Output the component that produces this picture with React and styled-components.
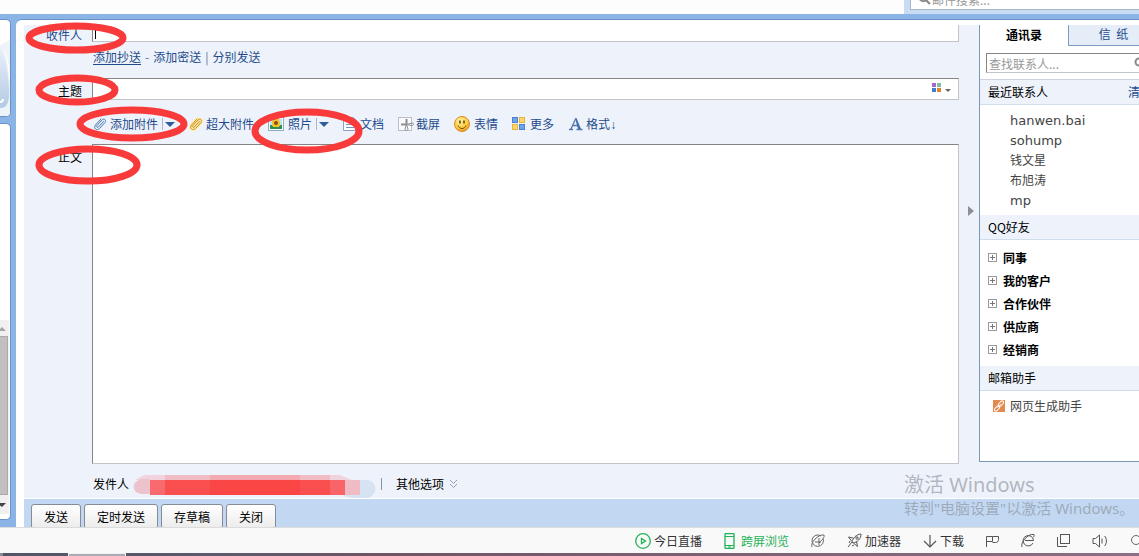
import React from "react";
import styled, { createGlobalStyle, css } from "styled-components";

const recentContacts = [
  { name: "hanwen.bai", latin: true },
  { name: "sohump", latin: true },
  { name: "钱文星" },
  { name: "布旭涛" },
  { name: "mp", latin: true },
];
const friendGroups = ["同事", "我的客户", "合作伙伴", "供应商", "经销商"];

function App() {
  return (
    <>
      <GlobalStyle />
      <PageStyled>
        <TopBar>
          <MailSearch>
            <SearchIcon size={14} />
            <input type="text" aria-label="邮件搜索" placeholder="邮件搜索..." />
          </MailSearch>
        </TopBar>
        <Workspace>
          <LeftRail />
          <MainPanel>
            <PanelInner>
              <Columns>
                <ComposeForm />
                <Divider>
                  <button type="button" aria-label="收起">
                    <svg width="6" height="10">
                      <path d="M0 0l6 5-6 5z" fill="#8c8f94" />
                    </svg>
                  </button>
                </Divider>
                <ContactsPanel />
              </Columns>
              <ActionBar>
                <ActionButton type="submit">发送</ActionButton>
                <ActionButton type="button">定时发送</ActionButton>
                <ActionButton type="button">存草稿</ActionButton>
                <ActionButton type="button">关闭</ActionButton>
              </ActionBar>
            </PanelInner>
          </MainPanel>
        </Workspace>
        <StatusBar />
        <Taskbar>
          <TaskItem $width="3px" />
          <TaskItem $width="58px" $active />
        </Taskbar>
        <Watermark>
          <p>激活 Windows</p>
          <small>转到"电脑设置"以激活 Windows。</small>
        </Watermark>
        <Markup />
      </PageStyled>
    </>
  );
}

function LeftRail() {
  return (
    <RailStyled>
      <RailCard $height="98px">
        <svg width="10" height="98">
          <defs>
            <linearGradient id="drop" x1="0" y1="0" x2="0" y2="1">
              <stop offset="0" stopColor="#e9eff8" />
              <stop offset="1" stopColor="#b3cae5" />
            </linearGradient>
          </defs>
          <path d="M0 27l10-5v76H0z" fill="#eef2f9" />
          <path d="M0 30c4 2 8 22 9 40s-4 20-9 20z" fill="url(#drop)" />
          <path d="M5 34c3 9 4 18 5 28" stroke="#fff" fill="none" />
          <path d="M0 84c2 0 3-1 3-3" stroke="#fff" strokeWidth="2" fill="none" />
        </svg>
      </RailCard>
      <RailCard $grow>
        <RailScroll>
          <svg width="6" height="16">
            <path d="M-2 11l4-4 4 4z" fill="#a5a5a5" />
          </svg>
          <RailThumb />
          <svg width="6" height="19">
            <path d="M-3 8h9l-4 4z" fill="#454545" />
          </svg>
        </RailScroll>
      </RailCard>
    </RailStyled>
  );
}

function ComposeForm() {
  return (
    <FormStyled>
      <FormRow $height="17px">
        <FieldLabel htmlFor="to" $link>
          收件人
        </FieldLabel>
        <Field $cut>
          <Caret />
          <input type="text" id="to" />
        </Field>
      </FormRow>
      <CopyLinks>
        <a className="underlined" href="#cc">
          添加抄送
        </a>
        <span>-</span>
        <a href="#bcc">添加密送</a>
        <span>|</span>
        <a href="#separate">分别发送</a>
      </CopyLinks>
      <FormRow $height="22px">
        <FieldLabel htmlFor="subject">主题</FieldLabel>
        <Field>
          <input type="text" id="subject" />
          <button type="button" aria-label="主题颜色">
            <svg width="19" height="12">
              <path d="M0 1h4v4H0z" fill="#a368c9" />
              <path d="M5 1h4v4H5z" fill="#83bda0" />
              <path d="M0 6h4v4H0z" fill="#3f7fd0" />
              <path d="M5 6h4v4H5z" fill="#e0832b" />
              <path d="M13 7h6l-3 3z" fill="#666" />
            </svg>
          </button>
        </Field>
      </FormRow>
      <Toolbar>
        <Tool type="button" $gap="3px">
          <ClipIcon light="#e8f0fa" line="#4f7dad" />
          添加附件
          <DropMark />
        </Tool>
        <Tool type="button" $gap="3px">
          <ClipIcon light="#ffe9a3" line="#c98f27" />
          超大附件
        </Tool>
        <Tool type="button" $gap="3px">
          <svg width="17" height="16">
            <rect x="0.5" y="1.5" width="15" height="13" fill="#fff" stroke="#8eabd0" />
            <path d="M2 3h12v7H2z" fill="#bfe3f2" />
            <path d="M2 9h12v4H2z" fill="#2f8f4f" />
            <path d="M5 3h6v2h1v5h-1v1H5v-1H4V5h1z" fill="#f3c52c" />
            <circle cx="8" cy="7" r="2" fill="#8a4a17" />
          </svg>
          照片
          <DropMark />
        </Tool>
        <Tool type="button" $gap="3px">
          <svg width="14" height="16">
            <path d="M0.500 1.500h10l3 3v10h-13z" fill="#fff" stroke="#86a4cb" />
            <path d="M3 5.500h6M3 8.500h8M3 11.500h8" stroke="#6f93c4" />
          </svg>
          文档
        </Tool>
        <Tool type="button" $gap="2px">
          <svg width="16" height="16" fill="none">
            <rect x="0.5" y="1.5" width="13" height="13" fill="#fbfbfb" stroke="#b9bdc4" />
            <path d="M8.500 3v5.500M3 8.500h5.500" stroke="#8a8e95" strokeWidth="2" />
            <path d="M8.500 8.500L14 7c2 0 2 2.500 0 2.500zM8.500 8.500L7 13c0 2 3 2 3 0z" stroke="#8a8e95" />
          </svg>
          截屏
        </Tool>
        <Tool type="button" $gap="4px">
          <svg width="16" height="16">
            <defs>
              <radialGradient id="face" cx="0.4" cy="0.3" r="0.8">
                <stop offset="0" stopColor="#fff3a6" />
                <stop offset="0.6" stopColor="#fbc939" />
                <stop offset="1" stopColor="#e08a1c" />
              </radialGradient>
            </defs>
            <circle cx="8" cy="8" r="7.500" fill="url(#face)" stroke="#d98a25" />
            <path d="M6 4.500v3M10 4.500v3" stroke="#5d3b0a" strokeWidth="1.500" />
            <path d="M4 9.500c1.500 4 6.500 4 8 0" stroke="#7a4a10" fill="none" />
          </svg>
          表情
        </Tool>
        <Tool type="button" $gap="4px">
          <svg width="14" height="14">
            <rect x="0.5" y="0.5" width="5" height="5" fill="#6fa3ea" stroke="#4c83d0" />
            <rect x="7.500" y="0.5" width="5" height="5" fill="#ffd968" stroke="#e9b43a" />
            <rect x="0.5" y="7.500" width="5" height="5" fill="#ffd968" stroke="#e9b43a" />
            <rect x="7.500" y="7.500" width="5" height="5" fill="#6fa3ea" stroke="#4c83d0" />
          </svg>
          更多
        </Tool>
        <Tool type="button" $gap="3px">
          <svg width="15" height="14">
            <path
              d="M1 12.500h4M8.500 12.500h6M3 12L7.500 2M4.500 8.500h6"
              stroke="#5478ab"
              strokeWidth="1.300"
              fill="none"
            />
            <path d="M7 1h1.500l4.500 11h-3z" fill="#4470ac" />
          </svg>
          <span>
            格式<Arrow>↓</Arrow>
          </span>
        </Tool>
      </Toolbar>
      <FormRow $grow>
        <FieldLabel htmlFor="content">正文</FieldLabel>
        <BodyText id="content" />
      </FormRow>
      <SenderRow>
        <span>发件人</span>
        <Redaction />
        <i />
        <button type="button">
          其他选项
          <svg width="9" height="10" fill="none" stroke="#8f9db5">
            <path d="M1 1l3.500 3.500L8 1M1 5l3.500 3.500L8 5" />
          </svg>
        </button>
      </SenderRow>
    </FormStyled>
  );
}

function ContactsPanel() {
  return (
    <ContactsStyled>
      <Tabs>
        <Tab type="button" $active>
          通讯录
        </Tab>
        <Tab type="button">信&nbsp; 纸</Tab>
      </Tabs>
      <ContactSearch>
        <input type="text" aria-label="查找联系人" placeholder="查找联系人..." />
        <SearchIcon size={12} />
      </ContactSearch>
      <SectionTitle $lined>
        <span>最近联系人</span>
        <a href="#clear">清空</a>
      </SectionTitle>
      <RecentList>
        {recentContacts.map(({ name, latin }) => (
          <RecentItem key={name} $latin={latin}>
            {name}
          </RecentItem>
        ))}
      </RecentList>
      <SectionTitle>QQ好友</SectionTitle>
      <GroupList>
        {friendGroups.map((name) => (
          <li key={name}>
            <button type="button">
              <svg width="9" height="9" fill="none">
                <rect x="0.5" y="0.5" width="8" height="8" stroke="#9a9a9a" />
                <path d="M2 4.500h5M4.500 2v5" stroke="#777" />
              </svg>
              {name}
            </button>
          </li>
        ))}
      </GroupList>
      <SectionTitle>邮箱助手</SectionTitle>
      <Helper href="#helper">
        <svg width="12" height="12" fill="none" stroke="#fff">
          <rect width="12" height="12" fill="#e58a4e" stroke="none" />
          <rect x="5" y="2" width="6" height="3" rx="1.500" transform="rotate(-45 8 3.500)" />
          <rect x="1" y="7" width="6" height="3" rx="1.500" transform="rotate(-45 4 8.500)" />
          <path d="M4.500 7.500l3-3" />
        </svg>
        网页生成助手
      </Helper>
    </ContactsStyled>
  );
}

function StatusBar() {
  return (
    <StatusStyled>
      <StatusItem type="button" $gap="3px">
        <svg width="16" height="16" fill="none" stroke="#1fb257">
          <circle cx="8" cy="8" r="7.300" strokeWidth="1.300" />
          <path d="M6.500 5.500v5l4-2.500z" strokeWidth="1.300" />
        </svg>
        今日直播
      </StatusItem>
      <StatusItem type="button" $gap="5px" $green>
        <svg width="12" height="16" fill="none" stroke="#1fb257">
          <rect x="1" y="0.5" width="9" height="15" rx="1" strokeWidth="1.300" />
          <path d="M1 3.500h9M1 12.500h9M4 14h3" />
        </svg>
        跨屏浏览
      </StatusItem>
      <StatusItem type="button" aria-label="网速">
        <svg width="14" height="14" fill="none" stroke="#666">
          <path d="M12 4.500a5.700 5.700 0 1 1-2-2.500" />
          <path d="M1 13C-1 9 7 0 13 1c1 2-2 5-5 8M4 8h6M8 4v7" />
        </svg>
      </StatusItem>
      <StatusItem type="button" $gap="3px">
        <svg width="15" height="15" fill="none" stroke="#555">
          <path d="M5 9C6 5 9 1.500 14 1c0 5-3.500 8-8 9z" />
          <path d="M6 5L1.500 4l3 4M9.500 8.500l1 5-4-3.500M5 9l-4 5M3 8l-1 2M7 12l-2 1" />
          <circle cx="10" cy="5" r="1.200" />
        </svg>
        加速器
      </StatusItem>
      <StatusItem type="button" $gap="3px">
        <svg width="14" height="14" fill="none" stroke="#555" strokeWidth="1.200">
          <path d="M7 1v12M1 7l6 6 6-6" />
        </svg>
        下载
      </StatusItem>
      <StatusItem type="button" aria-label="标记">
        <svg width="13" height="14" fill="none" stroke="#555">
          <path d="M0.500 13V2.500h6v5h-6M6.500 2.500h6v3c0 2-1 3-3 3H6.500" />
        </svg>
      </StatusItem>
      <StatusItem type="button" aria-label="浏览器">
        <svg width="14" height="15" fill="none" stroke="#555">
          <path d="M12 10a5.200 5.200 0 1 1 .5-2.500H4" />
          <path d="M1 14C-1 10 7 0 13 1.500c.5 1 0 2-1 3" />
        </svg>
      </StatusItem>
      <StatusItem type="button" aria-label="窗口">
        <svg width="13" height="13" fill="none" stroke="#555">
          <rect x="3.500" y="0.500" width="9" height="9" />
          <path d="M0.500 3v9.500H10" />
        </svg>
      </StatusItem>
      <StatusItem type="button" aria-label="声音">
        <svg width="16" height="14" fill="none" stroke="#555">
          <path d="M1 4.500h2.500L7.500 1v12L3.500 9.500H1zM10 4.500v5M12.500 2c2.500 2 2.500 8 0 10" />
        </svg>
      </StatusItem>
      <StatusItem type="button" aria-label="缩放">
        <svg width="9" height="14" fill="none" stroke="#666">
          <circle cx="6" cy="6" r="4.500" />
          <path d="M9 9l5 5" />
        </svg>
      </StatusItem>
    </StatusStyled>
  );
}

function SearchIcon({ size }) {
  return (
    <svg width={size} height={size} viewBox="0 0 12 12" fill="none" stroke="#8b8b8b" strokeWidth="2">
      <circle cx="5" cy="5" r="3.500" />
      <path d="M7.500 7.500L11 11" />
    </svg>
  );
}

function ClipIcon({ light, line }) {
  const wire = "M10.500 4.500L5.500 10c-1 1-2.500 0-1.500-1.500l5-5.500c2-2 4.500 0 3 2.500l-5.500 6c-2.500 2.500-6.500 0-4-3.500L8 2";
  return (
    <svg width="14" height="14" fill="none" strokeLinecap="round">
      <path d={wire} stroke={light} strokeWidth="3" />
      <path d={wire} stroke={line} />
    </svg>
  );
}

function DropMark() {
  return (
    <svg width="14" height="14">
      <path d="M1.500 1v12" stroke="#a9b8cf" />
      <path d="M4 5h10l-5 5z" fill="#2f5c9c" />
    </svg>
  );
}

function Redaction() {
  return (
    <svg width="245" height="26">
      <path d="M12 1h196l12 5H3z" fill="#f0d3dc" />
      <path d="M33 6V1h165v5z" fill="#f2bcc4" />
      <path d="M78 1h90v5H78z" fill="#f3a9b0" />
      <path d="M10 5h8v15h-8c-10 0-12-13 0-15z" fill="#ecc3cc" />
      <path d="M18 6h15v15H18z" fill="#f86a6e" />
      <path d="M33 6h180v15H33z" fill="#f9504f" />
      <path d="M78 6h90v15H78z" fill="#fa4645" />
      <path d="M198 6h15v15h-15z" fill="#f86468" />
      <path d="M213 6h15v15h-15z" fill="#efbcc6" />
      <path d="M228 6h8c9 2 9 12 4 16-8 6-20 3-30-1h18z" fill="#d6e3f2" />
    </svg>
  );
}

// hand-drawn circles laid over the form
function Markup() {
  return (
    <MarkupStyled width="370" height="200">
      <ellipse cx="76" cy="38" rx="47" ry="12" />
      <ellipse cx="77" cy="90" rx="38" ry="12" />
      <ellipse cx="132" cy="124" rx="52" ry="14" />
      <ellipse cx="307" cy="131" rx="52" ry="19" />
      <ellipse cx="88" cy="165" rx="49" ry="16" />
    </MarkupStyled>
  );
}

const GlobalStyle = createGlobalStyle`
  * {
    box-sizing: border-box;
  }
  body {
    margin: 0;
    color: #000;
    font-family: "Noto Sans CJK SC", sans-serif;
    font-size: 12px;
    line-height: 20px;
  }
  button, input, textarea {
    margin: 0;
    padding: 0;
    border: 0;
    outline: none;
    background: transparent;
    color: inherit;
    font: inherit;
  }
  svg {
    display: block;
    flex: none;
  }
  ul {
    margin: 0;
    padding: 0;
    list-style: none;
  }
  a {
    color: #1f4b8c;
    text-decoration: none;
  }
`;

const PageStyled = styled.div`
  position: relative;
  display: flex;
  flex-direction: column;
  height: 100vh;
  overflow: hidden;
`;

const TopBar = styled.header`
  display: flex;
  justify-content: flex-end;
  height: 14px;
  background: #fdfdfd;
`;

const MailSearch = styled.div`
  display: flex;
  align-items: flex-end;
  width: 235px;
  padding: 0 0 4px 6px;
  background: #c8dcf4;
  overflow: hidden;

  svg {
    width: 22px;
    height: 20px;
    padding: 2px 0 4px 6px;
    background: #fff;
    border-bottom: 1px solid #a9b6c6;
    border-left: 1px solid #a9b6c6;
  }
  input {
    flex: 1;
    min-width: 0;
    height: 20px;
    background: #fff;
    border-bottom: 1px solid #a9b6c6;
  }
  input::placeholder {
    color: #999;
  }
`;

const Workspace = styled.main`
  display: flex;
  flex: 1;
  min-height: 0;
  gap: 5px;
  padding-top: 5px;
  background: #8ab3e6;
`;

const RailStyled = styled.aside`
  display: flex;
  flex-direction: column;
  gap: 6px;
  width: 11px;
  padding-bottom: 7px;
`;

const RailCard = styled.div`
  display: flex;
  flex: ${({ $grow }) => ($grow ? "1" : "none")};
  height: ${({ $height }) => $height || "auto"};
  align-items: flex-end;
  min-height: 0;
  background: #fff;
  border: 1px solid #6893c9;
  border-left: 0;
  border-radius: 0 5px 5px 0;
  overflow: hidden;
`;

const RailScroll = styled.div`
  display: flex;
  flex-direction: column;
  width: 9px;
  height: 49%;
  margin-bottom: 5px;
  background: #f0f0f0;
`;

const RailThumb = styled.div`
  flex: 1;
  width: 8px;
  background: #c1bfc0;
  border: 1px solid #aaa;
  border-left: 0;
`;

const MainPanel = styled.div`
  flex: 1;
  min-width: 0;
  padding: 5px 0 0 8px;
  background: #fff;
  border-top: 1px solid #6893c9;
  border-top-left-radius: 6px;
`;

const PanelInner = styled.div`
  display: flex;
  flex-direction: column;
  height: 100%;
  background: #eef3fb;
`;

const Columns = styled.div`
  display: grid;
  grid-template-columns: 1fr 20px 160px;
  flex: 1;
  min-height: 0;
`;

const FormStyled = styled.form`
  display: flex;
  flex-direction: column;
  min-width: 0;
`;

const FormRow = styled.div`
  display: grid;
  grid-template-columns: 68px 1fr;
  flex: ${({ $grow }) => ($grow ? "1" : "none")};
  height: ${({ $height }) => $height || "auto"};
  min-height: 0;
`;

const FieldLabel = styled.label`
  padding: ${({ $link }) => ($link ? "0" : "3px")} 10px 0 0;
  text-align: right;
  line-height: 20px;
  color: ${({ $link }) => ($link ? "#1f4b8c" : "#000")};
`;

const sunken = css`
  background: #fff;
  border: 1px solid #c2c4c8;
  border-top-color: #858585;
  border-left-color: #858585;
`;

const Field = styled.div`
  ${sunken}
  position: relative;
  display: flex;
  align-items: center;
  height: ${({ $cut }) => ($cut ? "17px" : "22px")};
  ${({ $cut }) => $cut && "border-top: 0;"}

  input {
    flex: 1;
    min-width: 0;
    height: 100%;
    padding: 0 4px;
  }
  button {
    padding: 0 7px 2px 0;
  }
`;

const Caret = styled.span`
  position: absolute;
  left: 2px;
  top: 5px;
  width: 1px;
  height: 9px;
  background: #000;
`;

const CopyLinks = styled.div`
  display: flex;
  gap: 4px;
  height: 36px;
  padding: 5px 0 0 69px;
  color: #54749f;

  .underlined {
    height: 18px;
    border-bottom: 1px solid #1f4b8c;
  }
`;

const Toolbar = styled.div`
  display: flex;
  align-items: center;
  gap: 14px;
  height: 44px;
  padding: 4px 0 0 69px;
`;

const Tool = styled.button`
  display: flex;
  align-items: center;
  gap: ${({ $gap }) => $gap};
  color: #1f4b8c;
  white-space: nowrap;
`;

const Arrow = styled.span`
  font-family: "Liberation Sans", sans-serif;
`;

const BodyText = styled.textarea`
  ${sunken}
  display: block;
  width: 100%;
  height: 100%;
  padding: 6px;
  resize: none;
`;

const SenderRow = styled.div`
  display: flex;
  align-items: center;
  height: 34px;
  padding: 6px 0 0 69px;

  > svg {
    margin: 6px 4px 0 3px;
  }
  i {
    width: 1px;
    height: 12px;
    margin-right: 14px;
    background: #8893a3;
  }
  button {
    display: flex;
    align-items: center;
    gap: 5px;
  }
`;

const Divider = styled.div`
  display: flex;
  align-items: center;
  justify-content: center;
  padding: 0 0 101px 4px;
`;

const ContactsStyled = styled.aside`
  margin-bottom: 36px;
  background: #fff;
  border-left: 1px solid #7b98b8;
  border-bottom: 1px solid #7b98b8;
  overflow: hidden;
`;

const Tabs = styled.div`
  display: grid;
  grid-template-columns: 88px 90px;
  height: 21px;
`;

const Tab = styled.button`
  padding-bottom: 3px;
  line-height: 17px;
  ${({ $active }) =>
    $active
      ? "font-weight: bold;"
      : `
    color: #1f4b8c;
    background: #e4edf8;
    border-left: 1px solid #7b9cc6;
    border-bottom: 1px solid #7b9cc6;
  `}
`;

const ContactSearch = styled.div`
  ${sunken}
  display: flex;
  align-items: center;
  width: 172px;
  height: 20px;
  margin: 7px 0 6px 6px;

  input {
    width: 147px;
    height: 100%;
    padding: 0 2px;
  }
  input::placeholder {
    color: #999;
  }
`;

const SectionTitle = styled.h2`
  display: flex;
  justify-content: space-between;
  width: 172px;
  height: ${({ $lined }) => ($lined ? "26px" : "25px")};
  margin: 0;
  padding: 1px 0 0 8px;
  background: #eef3fb;
  border-top: ${({ $lined }) => ($lined ? "1px solid #ccd3dc" : "0")};
  border-bottom: 1px solid #cfdded;
  font-size: 12px;
  font-weight: normal;
  line-height: 22px;
`;

const RecentList = styled.ul`
  padding: 6px 0 4px 30px;
  color: #444;
`;

const RecentItem = styled.li`
  height: 20px;
  font-family: "DejaVu Sans", "Noto Sans CJK SC", sans-serif;
  font-size: ${({ $latin }) => ($latin ? "13px" : "12px")};
`;

const GroupList = styled.ul`
  padding: 6px 0 5px 8px;
  font-weight: bold;

  li {
    height: 23px;
  }
  button {
    display: flex;
    align-items: center;
    gap: 6px;
    line-height: 23px;
  }
`;

const Helper = styled.a`
  display: flex;
  align-items: center;
  gap: 5px;
  padding: 5px 0 0 13px;
  color: #444;
`;

const ActionBar = styled.div`
  display: flex;
  gap: 3px;
  height: 29px;
  padding: 5px 0 0 7px;
  background: #c2d8f2;
  border-top: 1px solid #fff;
  overflow: hidden;
`;

const ActionButton = styled.button`
  height: 25px;
  padding: 0 12px;
  background: linear-gradient(#fff, #ececec);
  border: 1px solid #868c94;
  border-radius: 3px;
`;

const StatusStyled = styled.footer`
  display: flex;
  align-items: center;
  justify-content: flex-end;
  gap: 22px;
  height: 26px;
  background: #f9f9f9;
  border-top: 1px solid #dcdcdc;
`;

const StatusItem = styled.button`
  display: flex;
  align-items: center;
  gap: ${({ $gap }) => $gap || "0"};
  color: ${({ $green }) => ($green ? "#1fb257" : "#333")};
  white-space: nowrap;
`;

const Taskbar = styled.div`
  display: flex;
  gap: 65px;
  height: 3px;
  background: linear-gradient(90deg, #4f5668, #5d5a6c 20%, #6e5566 32%, #8a7084);
`;

const TaskItem = styled.span`
  width: ${({ $width }) => $width};
  background: ${({ $active }) => ($active ? "#a9aab4" : "#8a8d99")};
  border: ${({ $active }) => ($active ? "1px solid #f2f2f4" : "0")};
  border-bottom: 0;
`;

const Watermark = styled.div`
  position: absolute;
  right: 4px;
  bottom: 36px;
  width: 231px;
  color: rgba(125, 130, 138, 0.55);
  font-family: "Noto Sans", "Noto Sans CJK SC", sans-serif;
  white-space: nowrap;
  pointer-events: none;

  p {
    margin: 0;
    font-size: 20px;
    line-height: 22px;
  }
  small {
    display: block;
    font-size: 15px;
    line-height: 24px;
  }
`;

const MarkupStyled = styled.svg`
  position: absolute;
  top: 0;
  left: 0;
  fill: none;
  stroke: #f83a3a;
  stroke-width: 7px;
  pointer-events: none;
`;

export default App;
